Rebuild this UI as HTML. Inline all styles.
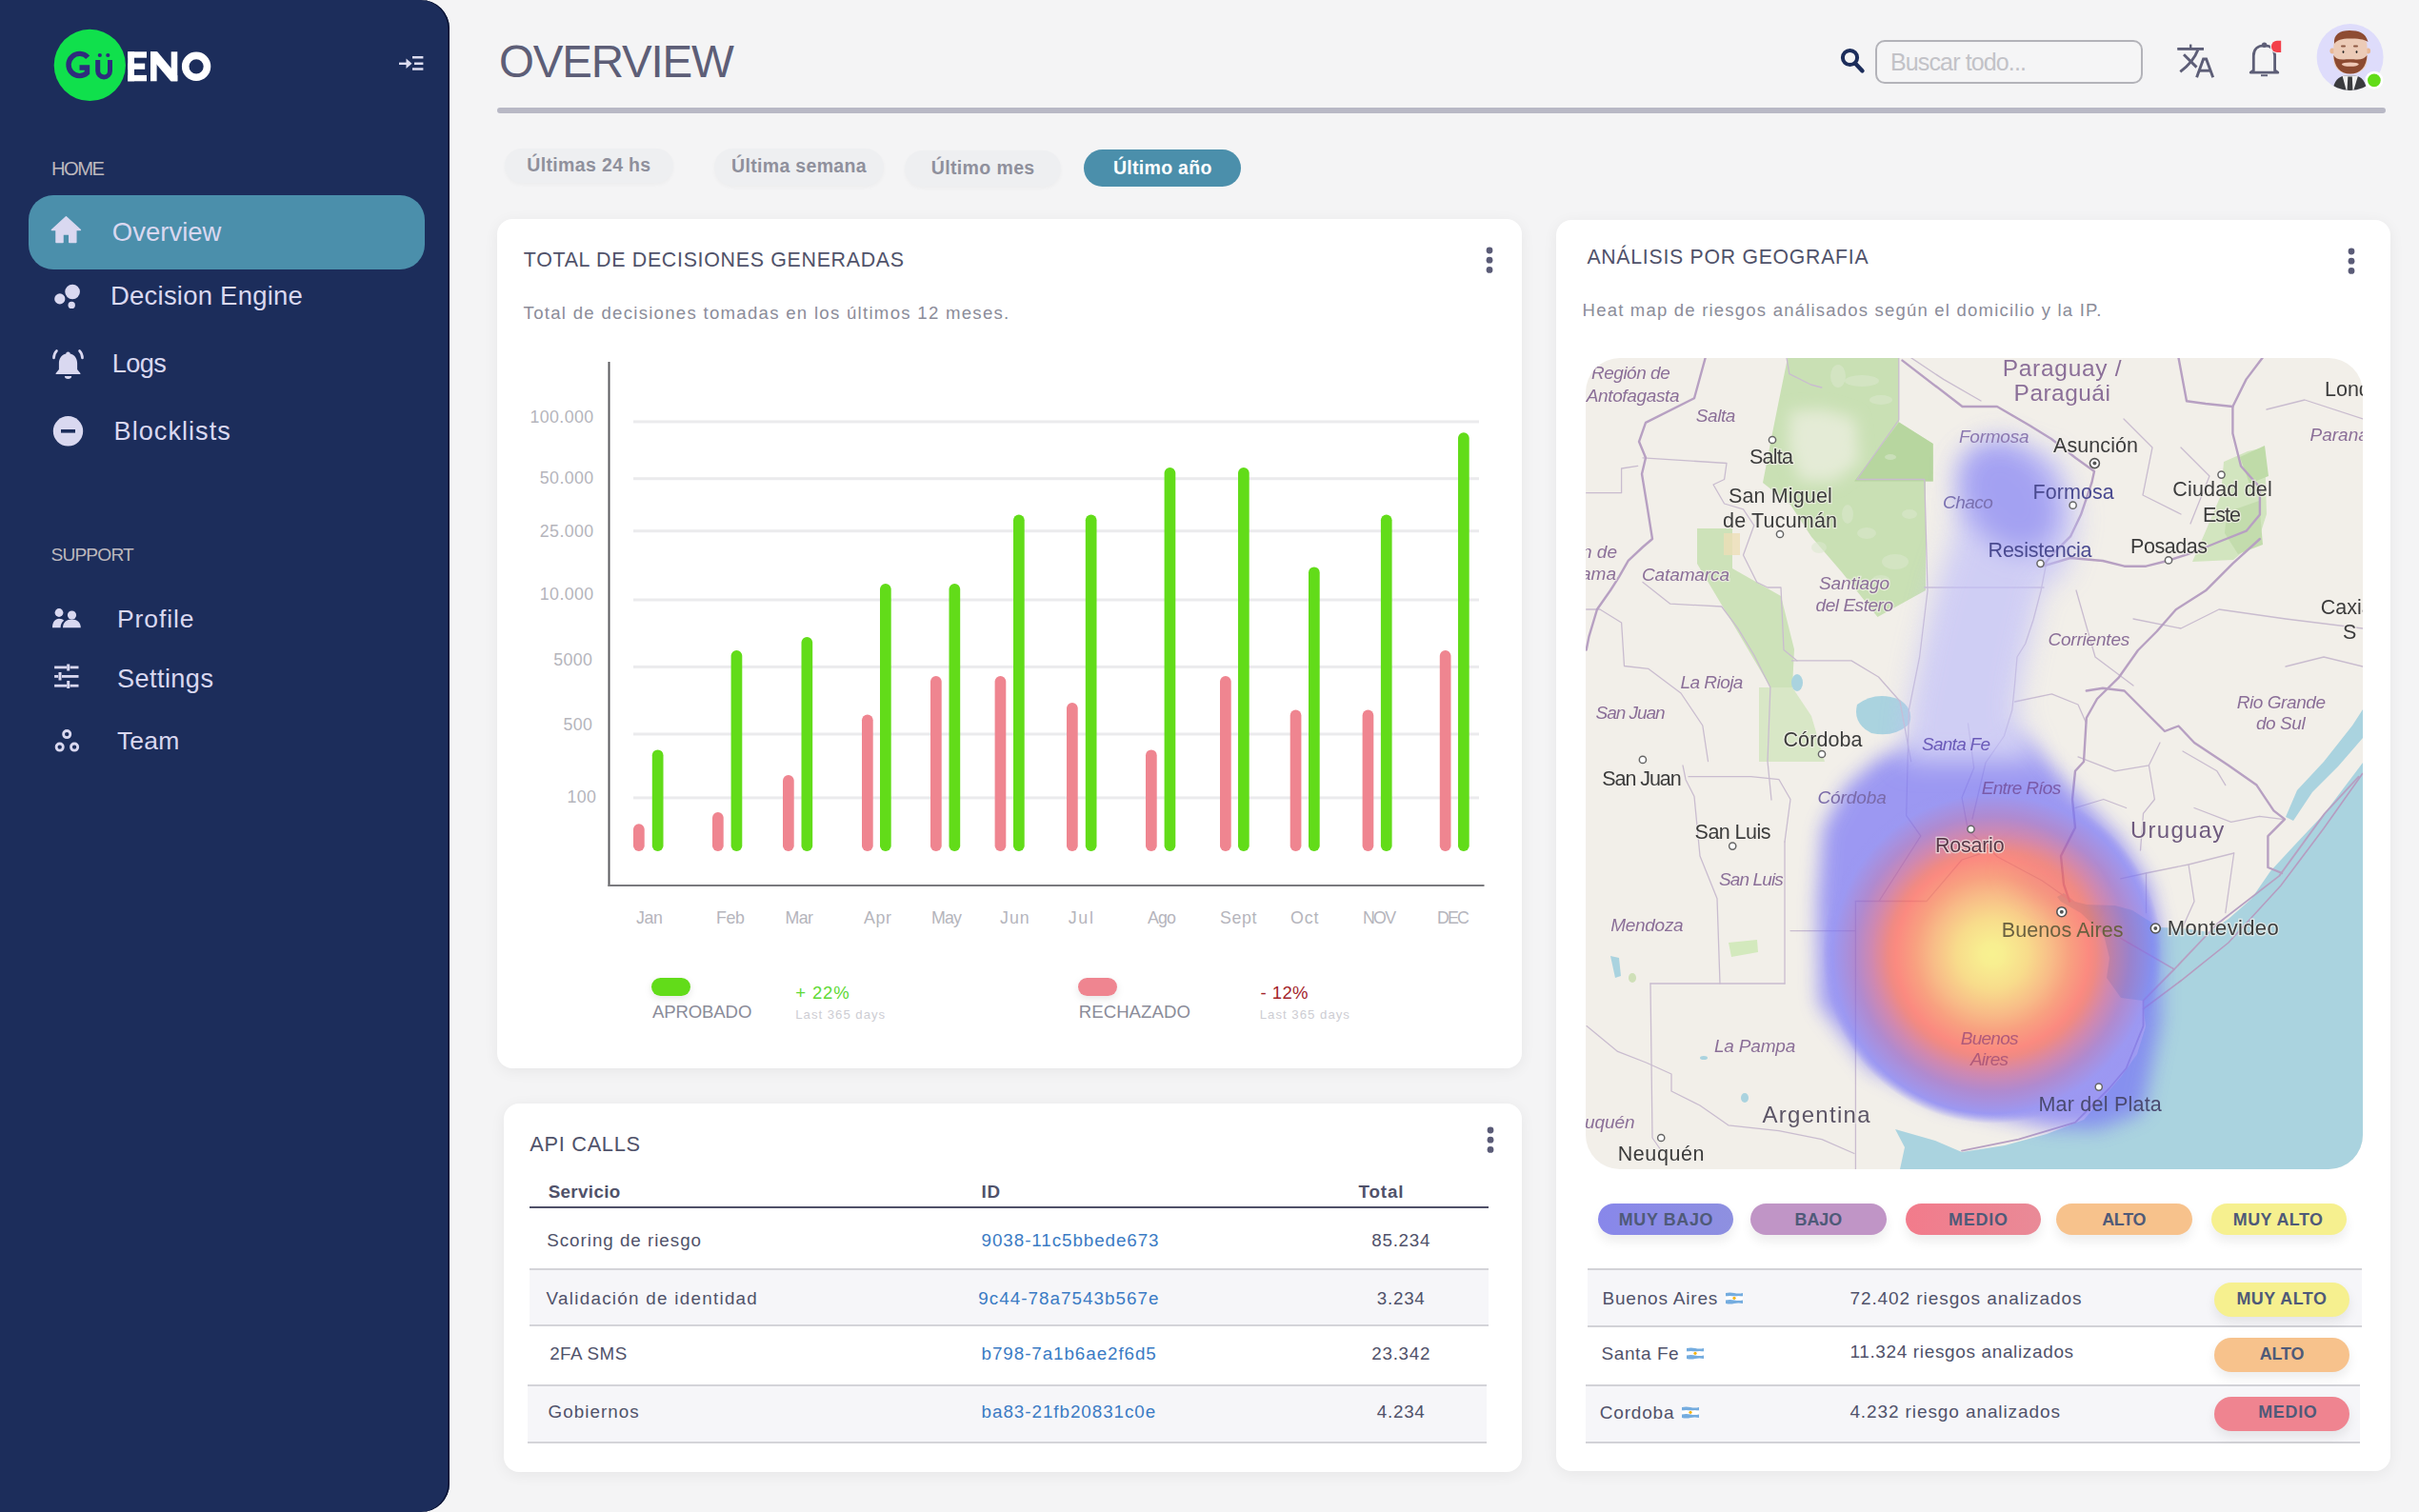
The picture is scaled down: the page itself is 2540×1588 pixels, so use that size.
<!DOCTYPE html>
<html><head><meta charset="utf-8">
<style>
*{box-sizing:border-box;margin:0;padding:0}
html,body{width:2540px;height:1588px;overflow:hidden;background:#f4f4f5;font-family:"Liberation Sans",sans-serif;position:relative}
.t{position:absolute;white-space:nowrap;line-height:1}
.a{position:absolute}
</style></head>
<body>
<div class="a" style="left:0;top:0;width:472px;height:1588px;background:#1c2d5b;border-radius:0 30px 30px 0;box-shadow:inset -1.6px 0 0 #0b1434"></div>
<svg class="a" style="left:0;top:0" width="472" height="120" viewBox="0 0 472 120">
<circle cx="94.3" cy="68.4" r="37.6" fill="#10e04c"/>
<path d="M92.2 60.2 A 11.6 11.6 0 1 0 91.5 76.5 L 91.5 71 L 83.5 71" fill="none" stroke="#2e2c7c" stroke-width="5.4"/>
<path d="M102.7 63 V 74.5 A 6.4 6.4 0 0 0 115.5 74.5 V 63" fill="none" stroke="#2e2c7c" stroke-width="5"/>
<circle cx="104.8" cy="58" r="2.1" fill="#2e2c7c"/><circle cx="113.3" cy="58" r="2.1" fill="#2e2c7c"/>
<g fill="#fff">
<rect x="134.2" y="54.3" width="6.8" height="31"/><rect x="134.2" y="54.3" width="19.8" height="6.4"/>
<rect x="134.2" y="66.6" width="18" height="6.2"/><rect x="134.2" y="78.9" width="19.8" height="6.4"/>
<rect x="158" y="54.3" width="6.6" height="31"/><rect x="179.7" y="54.3" width="6.6" height="31"/>
<polygon points="158,54.3 165.2,54.3 186.3,79.5 186.3,85.3 179.3,85.3 158,60"/>
</g>
<circle cx="206.1" cy="69.8" r="11.4" fill="none" stroke="#fff" stroke-width="7.6"/>
<g stroke="#dcdcf0" stroke-width="2.4" fill="none">
<path d="M419 66.8 H428"/><path d="M426.5 61.5 L432.5 66.8 L426.5 72.1Z" fill="#dcdcf0" stroke="none"/>
<path d="M433 60.3 H444.4 M435 66.8 H444.4 M433 72.5 H444.4"/>
</g>
</svg>
<div class="t" style="left:54.0px;top:166.8px;font-size:20.2px;color:#bcb8bd;letter-spacing:-1.53px;">HOME</div>
<div class="a" style="left:30px;top:205px;width:416px;height:78px;background:#4b8fab;border-radius:26px"></div>
<div class="t" style="left:117.8px;top:230.4px;font-size:27.5px;color:#d9d8f0;letter-spacing:0.01px;">Overview</div>
<div class="t" style="left:116.0px;top:297.1px;font-size:27.5px;color:#d9d8f0;letter-spacing:0.22px;">Decision Engine</div>
<div class="t" style="left:117.8px;top:367.7px;font-size:27.2px;color:#d9d8f0;letter-spacing:-0.67px;">Logs</div>
<div class="t" style="left:119.6px;top:438.7px;font-size:27.2px;color:#d9d8f0;letter-spacing:0.99px;">Blocklists</div>
<div class="t" style="left:53.5px;top:572.9px;font-size:19.2px;color:#bcb8bd;letter-spacing:-0.86px;">SUPPORT</div>
<div class="t" style="left:122.9px;top:636.8px;font-size:26.5px;color:#d9d8f0;letter-spacing:0.92px;">Profile</div>
<div class="t" style="left:122.9px;top:699.4px;font-size:27.2px;color:#d9d8f0;letter-spacing:0.41px;">Settings</div>
<div class="t" style="left:122.9px;top:765.0px;font-size:26.5px;color:#d9d8f0;letter-spacing:0.23px;">Team</div>
<svg class="a" style="left:0;top:200px" width="120" height="620" viewBox="0 200 120 620">
<g fill="#d9d8f0">
<path d="M69.4 227.8 L54.4 241.5 L59 241.5 L59 254.6 L66 254.6 L66 246 L72.8 246 L72.8 254.6 L79.8 254.6 L79.8 241.5 L84.4 241.5 Z" stroke="#d9d8f0" stroke-width="1.5" stroke-linejoin="round"/>
<circle cx="76.1" cy="306.5" r="7.8"/><circle cx="62.8" cy="313.9" r="5.6"/><circle cx="75.2" cy="320.4" r="3.7"/>
<path d="M71.5 369.5 c-1.3 0 -2.2 0.9 -2.2 2.1 c-4.6 1.2 -7.4 5 -7.4 10 v6.5 l-3.3 3.8 v1.2 h25.8 v-1.2 l-3.3 -3.8 v-6.5 c0 -5 -2.8 -8.8 -7.4 -10 c0 -1.2 -0.9 -2.1 -2.2 -2.1z"/>
<path d="M67.8 395 h7.4 c0 2 -1.6 3 -3.7 3 s-3.7 -1 -3.7 -3z"/>
<circle cx="71.5" cy="452.8" r="15.7"/>
<circle cx="62" cy="643.5" r="4.4"/><circle cx="75.5" cy="646" r="4.6"/>
<path d="M55 659.2 c0 -6 3 -9.5 7 -9.5 c2.5 0 4.2 0.8 5.2 2 c-2.2 1.5 -3.6 4 -3.6 7.5 z"/>
<path d="M66 659.2 c0 -5.5 4 -8.7 9.4 -8.7 s9.4 3.2 9.4 8.7 z"/>
</g>
<g fill="none" stroke="#d9d8f0" stroke-width="2.6" stroke-linecap="round">
<path d="M59.5 368.5 c-2 2 -3 4.5 -3 7.5 M83.5 368.5 c2 2 3 4.5 3 7.5"/>
</g>
<rect x="64" y="451" width="15" height="3.6" fill="#1c2d5b"/>
<g fill="#d9d8f0">
<rect x="57.1" y="699.5" width="13" height="2.8"/><rect x="73.5" y="699.5" width="9" height="2.8"/><rect x="70.2" y="697.5" width="3" height="7"/>
<rect x="57.1" y="709" width="4" height="2.8"/><rect x="65" y="709" width="17.5" height="2.8"/><rect x="61.5" y="706" width="3" height="8.5"/>
<rect x="57.1" y="718.8" width="13" height="2.8"/><rect x="73.5" y="718.8" width="9" height="2.8"/><rect x="70.2" y="715" width="3" height="8"/>
</g>
<g fill="none" stroke="#d9d8f0" stroke-width="2.8">
<circle cx="70.2" cy="771.1" r="3.6"/><circle cx="62.7" cy="784.6" r="3.6"/><circle cx="78.1" cy="784.6" r="3.6"/>
</g>
</svg>
<div class="t" style="left:524.0px;top:41.0px;font-size:47.5px;color:#5d5e77;letter-spacing:-1.19px;">OVERVIEW</div>
<div class="a" style="left:522px;top:113px;width:1983px;height:5.5px;background:#b8b8c5;border-radius:3px"></div>
<svg class="a" style="left:1925px;top:40px" width="40" height="45" viewBox="1925 40 40 45">
<circle cx="1942.5" cy="60.5" r="7.6" fill="none" stroke="#1c2d5b" stroke-width="4"/>
<path d="M1948 66.5 L1955.5 74.5" stroke="#1c2d5b" stroke-width="4.4" stroke-linecap="round"/>
</svg>
<div class="a" style="left:1969px;top:42px;width:281px;height:46px;border:2px solid #b3b3b9;border-radius:10px;background:#f5f5f6"></div>
<div class="t" style="left:1985.0px;top:53.0px;font-size:25px;color:#c2c2c7;letter-spacing:-0.87px;font-weight:normal;">Buscar todo...</div>
<svg class="a" style="left:2280px;top:40px" width="50" height="50" viewBox="2280 40 50 50">
<g stroke="#5d5e77" stroke-width="2.9" fill="none" stroke-linecap="butt">
<path d="M2286.2 51.4 H2314"/><path d="M2300.2 46.6 V51" stroke-width="2.4"/>
<path d="M2307.8 52.4 Q2303 65 2289.3 75.3"/>
<path d="M2293 57.2 L2306.5 70.6"/>
<path d="M2306.6 81.2 L2313.6 62 H2316.6 L2323.7 81.2" stroke-linejoin="miter"/><path d="M2309.6 74.2 H2320.6"/>
</g></svg>
<svg class="a" style="left:2355px;top:38px" width="45" height="48" viewBox="2355 38 45 48">
<path d="M2366.3 74 V58.5 C2366.3 51.5 2371 47.8 2377.6 47.8 C2384.2 47.8 2388.6 51.5 2388.6 58.5 V74 L2391.8 76.2 H2363.2 Z" fill="none" stroke="#5d5e77" stroke-width="2.8" stroke-linejoin="round"/>
<circle cx="2377.6" cy="47.2" r="2.7" fill="#5d5e77"/>
<rect x="2374" y="78.3" width="7" height="1.9" fill="#5d5e77"/>
<path d="M2395.2 42.8 V55 H2391 A6.1 6.1 0 0 1 2391 42.8 Z" fill="#f3404a" stroke="#f4f4f5" stroke-width="2.2" paint-order="stroke"/>
</svg>
<svg class="a" style="left:2425px;top:20px" width="90" height="80" viewBox="2425 20 90 80">
<defs><clipPath id="avc"><circle cx="2467.6" cy="60" r="35"/></clipPath></defs>
<circle cx="2467.6" cy="60" r="35" fill="#dedcfb"/>
<g clip-path="url(#avc)">
<path d="M2449.5 96 C2450 86 2455 80.5 2462 79.5 L2473 79.5 C2480 80.5 2484.5 86 2485 96z" fill="#3a3b3e"/>
<path d="M2459.5 79.5 L2476 79.5 L2471 96 L2464 96z" fill="#eeeeee"/>
<path d="M2465.3 80.5 L2469.8 80.5 L2470.5 96 L2464.5 96z" fill="#3a3b3e"/>
<ellipse cx="2449" cy="53.5" rx="2.6" ry="3" fill="#e8b896"/><ellipse cx="2486.5" cy="53.5" rx="2.6" ry="3" fill="#e8b896"/>
<path d="M2450.3 48 C2450.3 40 2457 36 2467.8 36 C2478.5 36 2485.5 40 2485.5 48 L2485.5 62 C2485.5 72 2478 77.5 2467.8 77.5 C2457.5 77.5 2450.3 72 2450.3 62z" fill="#eccbb7"/>
<path d="M2450.3 58 C2451 70 2457 77.5 2467.8 77.5 C2478.5 77.5 2485 70 2485.5 58 C2483 61 2480 62.5 2475 62.5 C2471 62 2464 62 2460 62.5 C2455 62.5 2452 61 2450.3 58z" fill="#8c4a31"/>
<ellipse cx="2467.8" cy="67.6" rx="9" ry="2.2" fill="#efc8b6"/>
<path d="M2451 46 C2450 36 2457 32 2467 32 C2477 32 2484 34.5 2486.5 44 C2482 41 2476 40.5 2467 40.5 C2459 40.5 2454 42 2451 46z" fill="#8e4c33"/>
<rect x="2458" y="47.5" width="5" height="2" rx="1" fill="#8e5a45"/><rect x="2471" y="47.5" width="5" height="2" rx="1" fill="#8e5a45"/>
<ellipse cx="2460.5" cy="54.6" rx="0.9" ry="1.3" fill="#222"/><ellipse cx="2474.5" cy="54.6" rx="0.9" ry="1.3" fill="#222"/>
</g>
<circle cx="2492.9" cy="84.3" r="8.2" fill="#62dc19" stroke="#fff" stroke-width="2.6"/>
</svg>
<div class="a" style="left:529.5px;top:155.6px;width:177px;height:36.5px;border-radius:19px;background:#eeeff1;box-shadow:0 2px 4px rgba(0,0,0,0.03)"></div>
<div class="a" style="left:750px;top:155.6px;width:178px;height:39px;border-radius:20px;background:#eeeff1;box-shadow:0 2px 4px rgba(0,0,0,0.03)"></div>
<div class="a" style="left:950px;top:158px;width:164px;height:38.4px;border-radius:20px;background:#eeeff1;box-shadow:0 2px 4px rgba(0,0,0,0.03)"></div>
<div class="a" style="left:1137.8px;top:157.4px;width:165.5px;height:39px;border-radius:20px;background:#4b8fab"></div>
<div class="t" style="left:553.3px;top:163.5px;font-size:19.5px;color:#8f909c;font-weight:bold;letter-spacing:0.35px;">Últimas 24 hs</div>
<div class="t" style="left:768.0px;top:165.2px;font-size:19.5px;color:#8f909c;font-weight:bold;letter-spacing:0.33px;">Última semana</div>
<div class="t" style="left:977.7px;top:166.5px;font-size:19.5px;color:#8f909c;font-weight:bold;letter-spacing:0.38px;">Último mes</div>
<div class="t" style="left:1169.0px;top:166.5px;font-size:19.5px;color:#ffffff;font-weight:bold;letter-spacing:0.29px;">Último año</div>
<div class="a" style="left:522px;top:230px;width:1076px;height:892px;background:#fff;border-radius:16px;box-shadow:0 3px 16px rgba(0,0,0,0.06)"></div>
<div class="t" style="left:549.8px;top:262.8px;font-size:21.4px;color:#50526a;letter-spacing:0.69px;">TOTAL DE DECISIONES GENERADAS</div>
<div class="t" style="left:549.6px;top:319.7px;font-size:18.6px;color:#8b8c99;letter-spacing:1.28px;">Total de decisiones tomadas en los últimos 12 meses.</div>
<svg class="a" style="left:1558.7px;top:257.9px" width="10" height="32" viewBox="1558.7 257.9 10 32"><g fill="#5a5b77"><circle cx="1563.7" cy="262.9" r="3.4"/><circle cx="1563.7" cy="273.09999999999997" r="3.4"/><circle cx="1563.7" cy="283.29999999999995" r="3.4"/></g></svg>
<svg class="a" style="left:540px;top:370px" width="1040" height="580" viewBox="540 370 1040 580"><rect x="665" y="441.4" width="888" height="3" fill="#ebebed"/><rect x="665" y="501.2" width="888" height="3" fill="#ebebed"/><rect x="665" y="556.2" width="888" height="3" fill="#ebebed"/><rect x="665" y="628.5" width="888" height="3" fill="#ebebed"/><rect x="665" y="698.9" width="888" height="3" fill="#ebebed"/><rect x="665" y="769.5" width="888" height="3" fill="#ebebed"/><rect x="665" y="836.4" width="888" height="3" fill="#ebebed"/><rect x="638.5" y="380" width="2" height="551" fill="#5b5b5f"/><rect x="638.5" y="929" width="920" height="2" fill="#7a7a7e"/><rect x="665" y="865.3" width="11.7" height="28.700000000000045" rx="5.8" fill="#ef8590"/><rect x="684.8" y="787.4" width="11.7" height="106.60000000000002" rx="5.8" fill="#62dc19"/><rect x="748" y="853" width="11.7" height="41" rx="5.8" fill="#ef8590"/><rect x="767.6" y="683" width="11.7" height="211" rx="5.8" fill="#62dc19"/><rect x="822" y="814" width="11.7" height="80" rx="5.8" fill="#ef8590"/><rect x="841.5" y="669" width="11.7" height="225" rx="5.8" fill="#62dc19"/><rect x="905" y="750.5" width="11.7" height="143.5" rx="5.8" fill="#ef8590"/><rect x="924" y="613" width="11.7" height="281" rx="5.8" fill="#62dc19"/><rect x="977" y="710" width="11.7" height="184" rx="5.8" fill="#ef8590"/><rect x="996.5" y="613" width="11.7" height="281" rx="5.8" fill="#62dc19"/><rect x="1044.6" y="710" width="11.7" height="184" rx="5.8" fill="#ef8590"/><rect x="1064" y="540.5" width="11.7" height="353.5" rx="5.8" fill="#62dc19"/><rect x="1120" y="738" width="11.7" height="156" rx="5.8" fill="#ef8590"/><rect x="1139.8" y="540.5" width="11.7" height="353.5" rx="5.8" fill="#62dc19"/><rect x="1203" y="787.4" width="11.7" height="106.60000000000002" rx="5.8" fill="#ef8590"/><rect x="1222.6" y="491" width="11.7" height="403" rx="5.8" fill="#62dc19"/><rect x="1281" y="710" width="11.7" height="184" rx="5.8" fill="#ef8590"/><rect x="1300" y="491" width="11.7" height="403" rx="5.8" fill="#62dc19"/><rect x="1354.7" y="745.6" width="11.7" height="148.39999999999998" rx="5.8" fill="#ef8590"/><rect x="1374" y="595.4" width="11.7" height="298.6" rx="5.8" fill="#62dc19"/><rect x="1430.6" y="745.6" width="11.7" height="148.39999999999998" rx="5.8" fill="#ef8590"/><rect x="1449.9" y="540.5" width="11.7" height="353.5" rx="5.8" fill="#62dc19"/><rect x="1511.8" y="683" width="11.7" height="211" rx="5.8" fill="#ef8590"/><rect x="1531" y="454.3" width="11.7" height="439.7" rx="5.8" fill="#62dc19"/></svg>
<div class="t" style="left:556.5px;top:430.2px;font-size:17.8px;color:#b5b5bc;letter-spacing:0.40px;">100.000</div>
<div class="t" style="left:566.8px;top:493.8px;font-size:17.8px;color:#b5b5bc;letter-spacing:0.40px;">50.000</div>
<div class="t" style="left:566.8px;top:550.0px;font-size:17.8px;color:#b5b5bc;letter-spacing:0.40px;">25.000</div>
<div class="t" style="left:566.8px;top:615.6px;font-size:17.8px;color:#b5b5bc;letter-spacing:0.40px;">10.000</div>
<div class="t" style="left:581.2px;top:685.2px;font-size:17.8px;color:#b5b5bc;letter-spacing:0.40px;">5000</div>
<div class="t" style="left:591.5px;top:753.0px;font-size:17.8px;color:#b5b5bc;letter-spacing:0.40px;">500</div>
<div class="t" style="left:595.5px;top:828.9px;font-size:17.8px;color:#b5b5bc;letter-spacing:0.40px;">100</div>
<div class="t" style="left:668.0px;top:955.5px;font-size:17.8px;color:#b5b5bc;letter-spacing:-0.35px;">Jan</div>
<div class="t" style="left:752.0px;top:955.5px;font-size:17.8px;color:#b5b5bc;letter-spacing:-0.32px;">Feb</div>
<div class="t" style="left:824.6px;top:955.5px;font-size:17.8px;color:#b5b5bc;letter-spacing:-0.63px;">Mar</div>
<div class="t" style="left:907.0px;top:955.5px;font-size:17.8px;color:#b5b5bc;letter-spacing:0.65px;">Apr</div>
<div class="t" style="left:978.0px;top:955.5px;font-size:17.8px;color:#b5b5bc;letter-spacing:-0.82px;">May</div>
<div class="t" style="left:1050.0px;top:955.5px;font-size:17.8px;color:#b5b5bc;letter-spacing:1.00px;">Jun</div>
<div class="t" style="left:1121.7px;top:955.5px;font-size:17.8px;color:#b5b5bc;letter-spacing:1.77px;">Jul</div>
<div class="t" style="left:1205.0px;top:955.5px;font-size:17.8px;color:#b5b5bc;letter-spacing:-0.82px;">Ago</div>
<div class="t" style="left:1281.0px;top:955.5px;font-size:17.8px;color:#b5b5bc;letter-spacing:0.60px;">Sept</div>
<div class="t" style="left:1355.0px;top:955.5px;font-size:17.8px;color:#b5b5bc;letter-spacing:0.95px;">Oct</div>
<div class="t" style="left:1431.0px;top:955.5px;font-size:17.8px;color:#b5b5bc;letter-spacing:-1.77px;">NOV</div>
<div class="t" style="left:1509.0px;top:955.5px;font-size:17.8px;color:#b5b5bc;letter-spacing:-1.80px;">DEC</div>
<div class="a" style="left:684px;top:1027px;width:41px;height:19px;border-radius:10px;background:#62dc19;box-shadow:0 3px 8px rgba(0,0,0,0.10)"></div>
<div class="a" style="left:1132px;top:1027px;width:41px;height:19px;border-radius:10px;background:#ef8590;box-shadow:0 3px 8px rgba(0,0,0,0.10)"></div>
<div class="t" style="left:685.0px;top:1053.5px;font-size:18.6px;color:#8b8c99;letter-spacing:-0.15px;">APROBADO</div>
<div class="t" style="left:1132.7px;top:1053.5px;font-size:18.6px;color:#8b8c99;letter-spacing:0.06px;">RECHAZADO</div>
<div class="t" style="left:835.3px;top:1033.5px;font-size:18.5px;color:#5ed936;letter-spacing:0.84px;">+ 22%</div>
<div class="t" style="left:1323.6px;top:1033.5px;font-size:18.5px;color:#a3242b;letter-spacing:0.41px;">- 12%</div>
<div class="t" style="left:835.3px;top:1058.8px;font-size:13.2px;color:#cdcdd3;letter-spacing:0.98px;">Last 365 days</div>
<div class="t" style="left:1322.7px;top:1058.8px;font-size:13.2px;color:#cdcdd3;letter-spacing:1.01px;">Last 365 days</div>
<div class="a" style="left:529px;top:1159px;width:1069px;height:387px;background:#fff;border-radius:16px;box-shadow:0 3px 16px rgba(0,0,0,0.06)"></div>
<div class="t" style="left:556.3px;top:1191.2px;font-size:21.8px;color:#50526a;letter-spacing:0.68px;">API CALLS</div>
<svg class="a" style="left:1560px;top:1182px" width="10" height="32" viewBox="1560 1182 10 32"><g fill="#5a5b77"><circle cx="1565" cy="1187" r="3.4"/><circle cx="1565" cy="1197.2" r="3.4"/><circle cx="1565" cy="1207.4" r="3.4"/></g></svg>
<div class="t" style="left:575.7px;top:1243.3px;font-size:18.8px;color:#50526a;font-weight:bold;letter-spacing:0.35px;">Servicio</div>
<div class="t" style="left:1030.6px;top:1243.3px;font-size:18.8px;color:#50526a;font-weight:bold;letter-spacing:0.60px;">ID</div>
<div class="t" style="left:1426.4px;top:1243.3px;font-size:18.8px;color:#50526a;font-weight:bold;letter-spacing:0.93px;">Total</div>
<div class="a" style="left:556px;top:1266.8px;width:1006.5px;height:2px;background:#4f5068"></div>
<div class="a" style="left:556px;top:1332px;width:1006.5px;height:60.5px;background:#f6f6f9;border-top:2px solid #d4d4d9;border-bottom:2px solid #d4d4d9"></div>
<div class="a" style="left:554px;top:1453.5px;width:1006.5px;height:62px;background:#f6f6f9;border-top:2px solid #d4d4d9;border-bottom:2px solid #d4d4d9"></div>
<div class="t" style="left:574.2px;top:1293.6px;font-size:18.8px;color:#50526a;letter-spacing:0.98px;">Scoring de riesgo</div>
<div class="t" style="left:1030.6px;top:1293.6px;font-size:18.8px;color:#3b7bc4;letter-spacing:0.94px;">9038-11c5bbede673</div>
<div class="t" style="left:1440.3px;top:1293.6px;font-size:18.8px;color:#50526a;letter-spacing:0.72px;">85.234</div>
<div class="t" style="left:573.6px;top:1355.0px;font-size:18.8px;color:#50526a;letter-spacing:1.29px;">Validación de identidad</div>
<div class="t" style="left:1027.2px;top:1355.0px;font-size:18.8px;color:#3b7bc4;letter-spacing:1.06px;">9c44-78a7543b567e</div>
<div class="t" style="left:1445.8px;top:1355.0px;font-size:18.8px;color:#50526a;letter-spacing:0.74px;">3.234</div>
<div class="t" style="left:577.2px;top:1413.3px;font-size:18.8px;color:#50526a;letter-spacing:0.46px;">2FA SMS</div>
<div class="t" style="left:1030.6px;top:1413.3px;font-size:18.8px;color:#3b7bc4;letter-spacing:0.94px;">b798-7a1b6ae2f6d5</div>
<div class="t" style="left:1440.3px;top:1413.3px;font-size:18.8px;color:#50526a;letter-spacing:0.72px;">23.342</div>
<div class="t" style="left:575.5px;top:1474.3px;font-size:18.8px;color:#50526a;letter-spacing:1.07px;">Gobiernos</div>
<div class="t" style="left:1030.6px;top:1474.3px;font-size:18.8px;color:#3b7bc4;letter-spacing:0.97px;">ba83-21fb20831c0e</div>
<div class="t" style="left:1445.8px;top:1474.3px;font-size:18.8px;color:#50526a;letter-spacing:0.74px;">4.234</div>
<div class="a" style="left:1633.5px;top:231px;width:876.5px;height:1314px;background:#fff;border-radius:16px;box-shadow:0 3px 16px rgba(0,0,0,0.06)"></div>
<div class="t" style="left:1666.4px;top:259.1px;font-size:21.2px;color:#50526a;letter-spacing:0.77px;">ANÁLISIS POR GEOGRAFIA</div>
<div class="t" style="left:1661.6px;top:316.5px;font-size:18.5px;color:#8b8c99;letter-spacing:1.21px;">Heat map de riesgos análisados según el domicilio y la IP.</div>
<svg class="a" style="left:2463.5px;top:259px" width="10" height="32" viewBox="2463.5 259 10 32"><g fill="#5a5b77"><circle cx="2468.5" cy="264" r="3.4"/><circle cx="2468.5" cy="274.2" r="3.4"/><circle cx="2468.5" cy="284.4" r="3.4"/></g></svg>
<svg class="a" style="left:1665px;top:376px" width="816" height="852" viewBox="1665 376 816 852"><defs>
<clipPath id="mc"><rect x="1665" y="376" width="816" height="852" rx="36" ry="36"/></clipPath>
<filter id="b8" x="-50%" y="-50%" width="200%" height="200%"><feGaussianBlur stdDeviation="8"/></filter>
<filter id="b14" x="-50%" y="-50%" width="200%" height="200%"><feGaussianBlur stdDeviation="14"/></filter>
<filter id="b24" x="-50%" y="-50%" width="200%" height="200%"><feGaussianBlur stdDeviation="24"/></filter>
<filter id="b34" x="-50%" y="-50%" width="200%" height="200%"><feGaussianBlur stdDeviation="34"/></filter>
</defs><g clip-path="url(#mc)"><rect x="1665" y="376" width="816" height="852" fill="#f2efe9"/><polygon points="1877.0,376.0 1994.0,376.0 1994.0,443.6 2029.7,466.0 2029.7,505.6 2022.0,505.6 2022.0,620.0 1971.5,648.0 1934.0,601.0 1902.0,563.8 1880.0,530.0 1851.0,507.0 1860.0,460.0 1868.0,420.0" fill="#c9e0b4"/><polygon points="1880.0,432.0 1915.0,430.0 1948.0,440.0 1952.0,485.0 1925.0,506.0 1890.0,505.0 1878.0,470.0" fill="#e4ebd6" filter="url(#b8)"/><polygon points="1994.0,443.6 2029.7,466.0 2029.7,505.6 1947.0,505.6" fill="#b7d69f"/><ellipse cx="1955" cy="400" rx="18" ry="6" fill="#dbe8cd" opacity="0.55"/><ellipse cx="1975" cy="420" rx="12" ry="5" fill="#dbe8cd" opacity="0.55"/><ellipse cx="1930" cy="395" rx="8" ry="12" fill="#dbe8cd" opacity="0.55"/><ellipse cx="1960" cy="560" rx="10" ry="6" fill="#dbe8cd" opacity="0.55"/><ellipse cx="1990" cy="590" rx="14" ry="8" fill="#dbe8cd" opacity="0.55"/><ellipse cx="1940" cy="540" rx="6" ry="10" fill="#dbe8cd" opacity="0.55"/><ellipse cx="2005" cy="540" rx="8" ry="5" fill="#dbe8cd" opacity="0.55"/><ellipse cx="1910" cy="575" rx="8" ry="6" fill="#dbe8cd" opacity="0.55"/><ellipse cx="1975" cy="610" rx="10" ry="6" fill="#dbe8cd" opacity="0.55"/><ellipse cx="1985" cy="480" rx="6" ry="3" fill="#dbe8cd" opacity="0.55"/><polygon points="1782.0,555.0 1819.0,555.0 1819.0,597.0 1870.0,626.0 1884.0,682.0 1882.0,722.0 1859.0,722.0 1819.0,654.0 1782.0,592.0" fill="#cde2b9"/><polygon points="1810.0,560.0 1827.0,560.0 1827.0,583.0 1810.0,583.0" fill="#ecdfb6" opacity="0.8"/><path d="M1847 722 l35 0 l20 30 l14 48 l-69 0z" fill="#d8e7c6"/><path d="M2335 485 L2360 474 L2378 470 L2380 540 L2372 565 L2345 588 L2302 590 L2315 560 L2332 520z" fill="#d2e5bf"/><path d="M2352 480 L2378 468 L2382 500 L2362 508z" fill="#bfdba8"/><path d="M2338 538 L2372 526 L2376 572 L2350 582 L2336 560z" fill="#c3dcad"/><path d="M1815 990 L1845 987 L1846 1000 L1818 1005z" fill="#d3e9bd"/><path d="M1691 1004 L1700 1006 L1702 1025 L1696 1027z" fill="#aad3df"/><ellipse cx="1714" cy="1027" rx="4" ry="5" fill="#cfe0b8"/><ellipse cx="1789" cy="1111" rx="4" ry="2" fill="#aad3df"/><ellipse cx="1832" cy="1153" rx="4" ry="5" fill="#aad3df"/><path d="M1950 740 q20 -15 45 -5 q15 10 10 25 q-15 15 -40 10 q-20 -10 -15 -30z" fill="#aad3df"/><ellipse cx="1887" cy="717" rx="6" ry="9" fill="#aad3df"/><polygon points="2481.0,801.0 2441.0,854.0 2409.0,888.0 2384.0,915.0 2364.0,944.0 2340.0,965.0 2320.0,979.0 2292.0,975.0 2268.0,974.0 2253.0,965.0 2239.0,956.0 2221.0,951.0 2191.0,950.0 2179.0,947.0 2167.0,938.0 2160.0,942.0 2164.0,947.0 2185.0,959.0 2209.0,982.0 2215.0,1006.0 2212.0,1027.0 2227.0,1048.0 2250.0,1051.0 2253.0,1078.0 2244.0,1107.0 2227.0,1131.0 2209.0,1152.0 2188.0,1176.0 2149.0,1191.0 2105.0,1203.0 2060.0,1210.0 2032.0,1198.0 1990.0,1186.0 2000.0,1205.0 1995.0,1228.0 2481.0,1228.0" fill="#aad3df"/><polygon points="2481.0,745.0 2481.0,775.0 2455.0,805.0 2428.0,832.0 2408.0,862.0 2400.0,858.0 2412.0,830.0 2440.0,800.0 2470.0,762.0" fill="#aad3df"/><path d="M2481 812 L2440 870 L2395 930 L2340 990 L2290 1030 L2250 1060" fill="none" stroke="#b69cc0" stroke-width="1.6"/><path d="M1665.7 517.7 L1702.6 517.7 L1702.6 492.0 L1719.7 489.3" fill="none" stroke="#c9bccf" stroke-width="1.3" stroke-linejoin="round" stroke-linecap="round" opacity="1"/><path d="M1725.0 480.8 L1813.0 486.5 L1810.6 503.5 L1799.0 509.0 L1810.6 529.0 L1830.5 534.8 L1841.8 551.8 L1830.5 583.0 L1844.7 611.5 L1856.0 617.0 L1870.0 617.0 L1873.0 682.5 L1887.0 693.9" fill="none" stroke="#c9bccf" stroke-width="1.3" stroke-linejoin="round" stroke-linecap="round" opacity="1"/><path d="M1665.7 640.0 L1680.0 640.0 L1702.6 654.0 L1705.5 699.5 L1731.0 702.4 L1765.0 728.0 L1787.8 762.0 L1793.5 799.5" fill="none" stroke="#c9bccf" stroke-width="1.3" stroke-linejoin="round" stroke-linecap="round" opacity="1"/><path d="M1725.0 611.5 L1753.8 634.2 L1807.7 637.0 L1824.8 659.8 L1841.8 688.0 L1858.9 722.0 L1856.0 799.5 L1860.0 840.0" fill="none" stroke="#c9bccf" stroke-width="1.3" stroke-linejoin="round" stroke-linecap="round" opacity="1"/><path d="M1881.6 693.9 L1944.0 693.9 L1972.5 711.0 L1995.0 736.5 L2006.6 799.5" fill="none" stroke="#c9bccf" stroke-width="1.3" stroke-linejoin="round" stroke-linecap="round" opacity="1"/><path d="M1993.8 375.7 L1993.8 441.0 L1949.8 503.5 L2020.8 503.5 L2024.0 620.5 L2015.6 690.0 L2004.4 745.6 L2001.7 856.7 L2016.8 878.0 L1973.0 946.5" fill="none" stroke="#c9bccf" stroke-width="1.3" stroke-linejoin="round" stroke-linecap="round" opacity="1"/><path d="M2020.8 617.0 L2146.0 617.0" fill="none" stroke="#c9bccf" stroke-width="1.3" stroke-linejoin="round" stroke-linecap="round" opacity="1"/><path d="M2006.6 375.7 L2040.7 398.4 L2080.0 421.0" fill="none" stroke="#c9bccf" stroke-width="1.3" stroke-linejoin="round" stroke-linecap="round" opacity="1"/><path d="M1876.0 375.7 L1878.8 392.7 L1901.5 404.0 L1912.8 407.0" fill="none" stroke="#c9bccf" stroke-width="1.3" stroke-linejoin="round" stroke-linecap="round" opacity="1"/><path d="M1880.0 977.6 L1948.4 977.6" fill="none" stroke="#c9bccf" stroke-width="1.3" stroke-linejoin="round" stroke-linecap="round" opacity="1"/><path d="M1948.4 946.5 L2023.0 946.5 L2060.0 903.0 L2079.0 896.8" fill="none" stroke="#c9bccf" stroke-width="1.3" stroke-linejoin="round" stroke-linecap="round" opacity="1"/><path d="M1948.4 946.5 L1948.4 1230.0" fill="none" stroke="#c9bccf" stroke-width="1.3" stroke-linejoin="round" stroke-linecap="round" opacity="1"/><path d="M1733.0 1033.0 L1874.0 1033.0" fill="none" stroke="#c9bccf" stroke-width="1.3" stroke-linejoin="round" stroke-linecap="round" opacity="1"/><path d="M1733.0 1033.0 L1735.0 1195.0 L1744.0 1208.0" fill="none" stroke="#c9bccf" stroke-width="1.3" stroke-linejoin="round" stroke-linecap="round" opacity="1"/><path d="M1874.0 884.0 L1874.0 1033.0" fill="none" stroke="#c9bccf" stroke-width="1.3" stroke-linejoin="round" stroke-linecap="round" opacity="1"/><path d="M1806.0 1033.0 L1803.0 943.7 L1785.0 899.0 L1779.0 836.5 L1770.0 818.7 L1767.0 803.8" fill="none" stroke="#c9bccf" stroke-width="1.3" stroke-linejoin="round" stroke-linecap="round" opacity="1"/><path d="M1874.0 884.0 L1880.0 839.5 L1868.0 818.7 L1838.6 815.7 L1773.0 815.7" fill="none" stroke="#c9bccf" stroke-width="1.3" stroke-linejoin="round" stroke-linecap="round" opacity="1"/><path d="M1666.0 1077.6 L1698.7 1104.4 L1728.5 1116.0 L1755.0 1128.0 L1755.0 1146.0 L1785.0 1161.0 L1814.8 1181.8 L1868.0 1187.7 L1913.0 1196.7 L1947.0 1211.5" fill="none" stroke="#c9bccf" stroke-width="1.3" stroke-linejoin="round" stroke-linecap="round" opacity="1"/><path d="M2066.5 760.0 L2072.7 806.6 L2060.0 837.7 L2066.5 872.0 L2097.6 900.0 L2144.0 924.8 L2175.0 946.5" fill="none" stroke="#c9bccf" stroke-width="1.3" stroke-linejoin="round" stroke-linecap="round" opacity="1"/><path d="M2149.0 590.0 L2143.0 620.5 L2135.0 651.0 L2126.7 676.0 L2118.0 690.0 L2115.6 717.8 L2112.8 745.6 L2104.4 773.0 L2085.0 801.0 L2071.0 860.0" fill="none" stroke="#c9bccf" stroke-width="1.3" stroke-linejoin="round" stroke-linecap="round" opacity="1"/><path d="M2115.6 737.0 L2154.4 728.9 L2182.0 740.0 L2190.6 759.4" fill="none" stroke="#c9bccf" stroke-width="1.3" stroke-linejoin="round" stroke-linecap="round" opacity="1"/><path d="M2182.0 794.9 L2220.7 809.8 L2256.4 803.8 L2268.0 780.0" fill="none" stroke="#c9bccf" stroke-width="1.3" stroke-linejoin="round" stroke-linecap="round" opacity="1"/><path d="M2256.4 803.8 L2262.4 839.5 L2250.5 854.4 L2247.5 893.0" fill="none" stroke="#c9bccf" stroke-width="1.3" stroke-linejoin="round" stroke-linecap="round" opacity="1"/><path d="M2179.0 848.5 L2208.8 839.5 L2232.6 848.5" fill="none" stroke="#c9bccf" stroke-width="1.3" stroke-linejoin="round" stroke-linecap="round" opacity="1"/><path d="M2292.0 789.0 L2327.9 809.8 L2336.8 824.6" fill="none" stroke="#c9bccf" stroke-width="1.3" stroke-linejoin="round" stroke-linecap="round" opacity="1"/><path d="M2304.0 848.5 L2342.7 863.3 L2372.5 857.4 L2396.3 860.4" fill="none" stroke="#c9bccf" stroke-width="1.3" stroke-linejoin="round" stroke-linecap="round" opacity="1"/><path d="M2226.7 922.9 L2253.5 917.0 L2298.0 908.0 L2345.7 896.0" fill="none" stroke="#c9bccf" stroke-width="1.3" stroke-linejoin="round" stroke-linecap="round" opacity="1"/><path d="M2298.0 908.0 L2304.0 946.7 L2292.0 973.5" fill="none" stroke="#c9bccf" stroke-width="1.3" stroke-linejoin="round" stroke-linecap="round" opacity="1"/><path d="M2253.5 917.0 L2253.5 958.6" fill="none" stroke="#c9bccf" stroke-width="1.3" stroke-linejoin="round" stroke-linecap="round" opacity="1"/><path d="M2345.7 896.0 L2336.8 958.6" fill="none" stroke="#c9bccf" stroke-width="1.3" stroke-linejoin="round" stroke-linecap="round" opacity="1"/><path d="M2240.0 650.0 L2290.0 660.0 L2330.0 640.0 L2400.0 650.0 L2481.0 660.0" fill="none" stroke="#c9bccf" stroke-width="1.3" stroke-linejoin="round" stroke-linecap="round" opacity="1"/><path d="M2400.0 700.0 L2440.0 690.0 L2481.0 700.0" fill="none" stroke="#c9bccf" stroke-width="1.3" stroke-linejoin="round" stroke-linecap="round" opacity="1"/><path d="M2230.0 440.0 L2260.0 470.0 L2250.0 520.0 L2290.0 540.0" fill="none" stroke="#c9bccf" stroke-width="1.3" stroke-linejoin="round" stroke-linecap="round" opacity="1"/><path d="M2290.0 470.0 L2320.0 500.0 L2300.0 550.0" fill="none" stroke="#c9bccf" stroke-width="1.3" stroke-linejoin="round" stroke-linecap="round" opacity="1"/><path d="M2380.0 430.0 L2420.0 420.0 L2481.0 440.0" fill="none" stroke="#c9bccf" stroke-width="1.3" stroke-linejoin="round" stroke-linecap="round" opacity="1"/><path d="M2180.0 620.0 L2200.0 690.0 L2240.0 720.0" fill="none" stroke="#c9bccf" stroke-width="1.3" stroke-linejoin="round" stroke-linecap="round" opacity="1"/><path d="M1790.7 375.7 L1779.0 418.3 L1728.0 443.9 L1721.0 463.8 L1728.0 480.8 L1724.0 497.8 L1729.6 532.0 L1735.0 566.0 L1725.0 574.5 L1709.7 588.8 L1700.0 605.8 L1691.0 620.0 L1677.0 640.0 L1668.5 668.3 L1665.7 682.5" fill="none" stroke="#b7a0c2" stroke-width="2.4" stroke-linejoin="round" stroke-linecap="round" opacity="1"/><path d="M1997.5 378.6 L2060.5 427.0 L2097.0 427.0 L2131.0 446.8 L2154.0 461.0 L2179.5 481.0 L2199.0 495.0 L2196.5 506.5 L2185.0 540.6 L2174.0 563.4 L2154.0 583.3 L2145.0 594.7" fill="none" stroke="#b7a0c2" stroke-width="2.4" stroke-linejoin="round" stroke-linecap="round" opacity="1"/><path d="M2145.0 594.7 L2174.0 586.0 L2208.0 589.0 L2230.6 594.7 L2253.4 594.7 L2276.0 589.0 L2301.7 580.5 L2330.0 569.0 L2358.6 557.7 L2372.9 540.6 L2372.9 512.0 L2353.0 489.5 L2344.4 455.3 L2344.4 427.0 L2358.6 398.4 L2375.7 375.7" fill="none" stroke="#b7a0c2" stroke-width="2.4" stroke-linejoin="round" stroke-linecap="round" opacity="1"/><path d="M2287.5 375.7 L2296.0 421.2 L2316.0 424.0 L2344.4 427.0" fill="none" stroke="#b7a0c2" stroke-width="2.4" stroke-linejoin="round" stroke-linecap="round" opacity="1"/><path d="M2372.9 566.0 L2344.4 591.8 L2316.0 620.3 L2284.7 640.2 L2264.8 663.0 L2244.9 683.0 L2225.0 711.3 L2202.0 734.0 L2190.8 754.0 L2188.0 800.0 L2179.0 809.8 L2176.0 839.5 L2179.0 869.3 L2164.0 899.0 L2167.0 928.8 L2173.0 946.7" fill="none" stroke="#b7a0c2" stroke-width="2.4" stroke-linejoin="round" stroke-linecap="round" opacity="1"/><path d="M2190.8 725.5 L2208.0 722.7 L2230.6 725.5 L2259.0 754.0 L2273.0 768.0 L2287.5 762.5 L2304.0 780.0 L2339.8 803.8 L2369.5 824.6 L2387.4 851.4 L2399.0 860.4 L2381.4 878.2 L2381.4 911.0 L2396.0 917.0" fill="none" stroke="#b7a0c2" stroke-width="2.4" stroke-linejoin="round" stroke-linecap="round" opacity="1"/><path d="M2476.7 815.7 L2441.0 854.4 L2393.3 919.9 L2328.0 970.5 L2283.0 1018.0 L2250.5 1050.8 L2250.5 1077.6 L2232.6 1122.0 L2214.8 1143.0 L2179.0 1178.8 L2119.5 1196.7 L2060.0 1208.6" fill="none" stroke="#b7a0c2" stroke-width="1.8" stroke-linejoin="round" stroke-linecap="round" opacity="1"/><path d="M2226.7 985.4 L2283.0 1018.0" fill="none" stroke="#b7a0c2" stroke-width="1.6" stroke-linejoin="round" stroke-linecap="round" opacity="1"/><defs><radialGradient id="hg" cx="2092" cy="1002" r="178" gradientUnits="userSpaceOnUse"><stop offset="0.0" stop-color="rgb(251,243,106)" stop-opacity="1"/><stop offset="0.066" stop-color="rgb(251,238,106)" stop-opacity="1"/><stop offset="0.208" stop-color="rgb(251,212,100)" stop-opacity="1"/><stop offset="0.351" stop-color="rgb(251,166,94)" stop-opacity="1"/><stop offset="0.46" stop-color="rgb(251,126,83)" stop-opacity="1"/><stop offset="0.57" stop-color="rgb(255,95,83)" stop-opacity="1"/><stop offset="0.613" stop-color="rgb(239,95,89)" stop-opacity="1"/><stop offset="0.712" stop-color="rgb(193,92,152)" stop-opacity="1"/><stop offset="0.811" stop-color="rgb(148,95,197)" stop-opacity="1"/><stop offset="0.942" stop-color="rgb(119,115,246)" stop-opacity="1"/><stop offset="1.0" stop-color="rgb(119,115,246)" stop-opacity="0"/></radialGradient><filter id="b10" x="-50%" y="-50%" width="200%" height="200%"><feGaussianBlur stdDeviation="10"/></filter></defs><g opacity="0.7"><polygon points="1910.0,1054.0 1908.0,950.0 1914.0,870.0 1938.0,826.0 1972.0,797.0 2020.0,776.0 2060.0,770.0 2097.0,770.0 2133.0,781.0 2178.0,832.0 2226.0,880.0 2257.0,929.0 2268.0,978.0 2269.0,1072.0 2250.0,1168.0 2203.0,1186.0 2151.0,1184.0 2041.0,1160.0 1962.0,1122.0" fill="rgb(119,115,246)" filter="url(#b10)"/><polygon points="2000.0,800.0 2004.0,746.0 2015.0,690.0 2032.0,620.0 2052.0,560.0 2060.0,480.0 2100.0,462.0 2160.0,480.0 2182.0,540.0 2170.0,600.0 2143.0,620.0 2127.0,690.0 2116.0,746.0 2140.0,800.0" fill="rgb(193,192,249)" filter="url(#b14)"/><ellipse cx="2110" cy="522" rx="46" ry="62" transform="rotate(-35 2110 522)" fill="rgb(130,128,246)" filter="url(#b14)"/><circle cx="2092" cy="1002" r="178" fill="url(#hg)"/><ellipse cx="2150" cy="925" rx="40" ry="22" transform="rotate(30 2150 925)" fill="rgb(239,95,89)" opacity="0.5" filter="url(#b14)"/></g><text x="1837.0" y="486.5" font-size="21.5" fill="#3c3c3c" letter-spacing="-0.76" stroke="#f2efe9" stroke-width="2.5" stroke-opacity="0.7" paint-order="stroke" font-family="Liberation Sans">Salta</text><text x="1815.0" y="528.3" font-size="21.5" fill="#3c3c3c" letter-spacing="0.14" stroke="#f2efe9" stroke-width="2.5" stroke-opacity="0.7" paint-order="stroke" font-family="Liberation Sans">San Miguel</text><text x="1809.0" y="553.8" font-size="21.5" fill="#3c3c3c" letter-spacing="0.19" stroke="#f2efe9" stroke-width="2.5" stroke-opacity="0.7" paint-order="stroke" font-family="Liberation Sans">de Tucumán</text><text x="1872.5" y="783.8" font-size="21.5" fill="#3c3c3c" letter-spacing="0.08" stroke="#f2efe9" stroke-width="2.5" stroke-opacity="0.7" paint-order="stroke" font-family="Liberation Sans">Córdoba</text><text x="1682.3" y="824.6" font-size="21.5" fill="#3c3c3c" letter-spacing="-1.06" stroke="#f2efe9" stroke-width="2.5" stroke-opacity="0.7" paint-order="stroke" font-family="Liberation Sans">San Juan</text><text x="1779.6" y="881.1" font-size="21.5" fill="#3c3c3c" letter-spacing="-0.55" stroke="#f2efe9" stroke-width="2.5" stroke-opacity="0.7" paint-order="stroke" font-family="Liberation Sans">San Luis</text><text x="2032.0" y="894.5" font-size="21.5" fill="#5a3a4a" letter-spacing="-0.25" stroke="#f2efe9" stroke-width="2.5" stroke-opacity="0.7" paint-order="stroke" font-family="Liberation Sans">Rosario</text><text x="2101.7" y="983.8" font-size="21.5" fill="#6a6040" letter-spacing="0.11" font-family="Liberation Sans">Buenos Aires</text><text x="2275.8" y="982.0" font-size="22" fill="#3c3c3c" letter-spacing="0.35" stroke="#f2efe9" stroke-width="2.5" stroke-opacity="0.7" paint-order="stroke" font-family="Liberation Sans">Montevideo</text><text x="2140.4" y="1166.8" font-size="21.5" fill="#4a4a70" letter-spacing="0.23" font-family="Liberation Sans">Mar del Plata</text><text x="1850.5" y="1178.9" font-size="24" fill="#5c5566" letter-spacing="1.29" stroke="#f2efe9" stroke-width="2.5" stroke-opacity="0.7" paint-order="stroke" font-family="Liberation Sans">Argentina</text><text x="1698.7" y="1218.8" font-size="21.5" fill="#3c3c3c" letter-spacing="0.59" stroke="#f2efe9" stroke-width="2.5" stroke-opacity="0.7" paint-order="stroke" font-family="Liberation Sans">Neuquén</text><text x="2156.0" y="475.2" font-size="21.5" fill="#3c3c3c" letter-spacing="0.08" stroke="#f2efe9" stroke-width="2.5" stroke-opacity="0.7" paint-order="stroke" font-family="Liberation Sans">Asunción</text><text x="2134.5" y="523.6" font-size="21.5" fill="#4a4a90" letter-spacing="0.08" font-family="Liberation Sans">Formosa</text><text x="2087.6" y="584.8" font-size="21.5" fill="#4a4a90" letter-spacing="-0.23" font-family="Liberation Sans">Resistencia</text><text x="2237.0" y="580.5" font-size="21.5" fill="#3c3c3c" letter-spacing="-0.44" stroke="#f2efe9" stroke-width="2.5" stroke-opacity="0.7" paint-order="stroke" font-family="Liberation Sans">Posadas</text><text x="2281.3" y="520.8" font-size="21.5" fill="#3c3c3c" letter-spacing="0.18" stroke="#f2efe9" stroke-width="2.5" stroke-opacity="0.7" paint-order="stroke" font-family="Liberation Sans">Ciudad del</text><text x="2313.0" y="548.3" font-size="21.5" fill="#3c3c3c" letter-spacing="-1.00" stroke="#f2efe9" stroke-width="2.5" stroke-opacity="0.7" paint-order="stroke" font-family="Liberation Sans">Este</text><text x="2237.0" y="879.5" font-size="24" fill="#6e5a7e" letter-spacing="1.27" stroke="#f2efe9" stroke-width="2.5" stroke-opacity="0.7" paint-order="stroke" font-family="Liberation Sans">Uruguay</text><text x="2102.7" y="394.9" font-size="24.5" fill="#8b6f98" letter-spacing="0.72" stroke="#f2efe9" stroke-width="2.5" stroke-opacity="0.7" paint-order="stroke" font-family="Liberation Sans">Paraguay /</text><text x="2114.6" y="420.5" font-size="24.5" fill="#8b6f98" letter-spacing="0.46" stroke="#f2efe9" stroke-width="2.5" stroke-opacity="0.7" paint-order="stroke" font-family="Liberation Sans">Paraguái</text><text x="2436.8" y="644.8" font-size="21.5" fill="#3c3c3c" letter-spacing="0.00" stroke="#f2efe9" stroke-width="2.5" stroke-opacity="0.7" paint-order="stroke" font-family="Liberation Sans">Caxias</text><text x="2460.0" y="670.6" font-size="21.5" fill="#3c3c3c" letter-spacing="0.00" stroke="#f2efe9" stroke-width="2.5" stroke-opacity="0.7" paint-order="stroke" font-family="Liberation Sans">S</text><text x="2441.0" y="416.1" font-size="21.5" fill="#3c3c3c" letter-spacing="0.00" stroke="#f2efe9" stroke-width="2.5" stroke-opacity="0.7" paint-order="stroke" font-family="Liberation Sans">Londrina</text><text x="1671.0" y="397.9" font-size="19" fill="#8b6f98" letter-spacing="-0.49" font-style="italic" stroke="#f2efe9" stroke-width="2.5" stroke-opacity="0.7" paint-order="stroke" font-family="Liberation Sans">Región de</text><text x="1665.7" y="421.5" font-size="19" fill="#8b6f98" letter-spacing="-0.35" font-style="italic" stroke="#f2efe9" stroke-width="2.5" stroke-opacity="0.7" paint-order="stroke" font-family="Liberation Sans">Antofagasta</text><text x="1780.7" y="443.1" font-size="19" fill="#8b6f98" letter-spacing="-0.39" font-style="italic" stroke="#f2efe9" stroke-width="2.5" stroke-opacity="0.7" paint-order="stroke" font-family="Liberation Sans">Salta</text><text x="1724.0" y="610.1" font-size="19" fill="#8b6f98" letter-spacing="-0.12" font-style="italic" stroke="#f2efe9" stroke-width="2.5" stroke-opacity="0.7" paint-order="stroke" font-family="Liberation Sans">Catamarca</text><text x="1910.0" y="618.9" font-size="19" fill="#8b6f98" letter-spacing="-0.14" font-style="italic" stroke="#f2efe9" stroke-width="2.5" stroke-opacity="0.7" paint-order="stroke" font-family="Liberation Sans">Santiago</text><text x="1906.6" y="641.6" font-size="19" fill="#8b6f98" letter-spacing="-0.46" font-style="italic" stroke="#f2efe9" stroke-width="2.5" stroke-opacity="0.7" paint-order="stroke" font-family="Liberation Sans">del Estero</text><text x="1764.5" y="722.6" font-size="19" fill="#8b6f98" letter-spacing="-0.54" font-style="italic" stroke="#f2efe9" stroke-width="2.5" stroke-opacity="0.7" paint-order="stroke" font-family="Liberation Sans">La Rioja</text><text x="1675.6" y="755.1" font-size="19" fill="#8b6f98" letter-spacing="-1.04" font-style="italic" stroke="#f2efe9" stroke-width="2.5" stroke-opacity="0.7" paint-order="stroke" font-family="Liberation Sans">San Juan</text><text x="1908.5" y="843.7" font-size="19" fill="#7a6aa8" letter-spacing="-0.10" font-style="italic" font-family="Liberation Sans">Córdoba</text><text x="2018.0" y="788.1" font-size="19" fill="#6a5ab8" letter-spacing="-0.73" font-style="italic" font-family="Liberation Sans">Santa Fe</text><text x="2080.8" y="834.1" font-size="19" fill="#7a5aa8" letter-spacing="-0.71" font-style="italic" font-family="Liberation Sans">Entre Ríos</text><text x="2040.0" y="533.8" font-size="19" fill="#7a70b0" letter-spacing="-0.55" font-style="italic" font-family="Liberation Sans">Chaco</text><text x="2057.0" y="465.1" font-size="19" fill="#8b78b0" letter-spacing="-0.25" font-style="italic" font-family="Liberation Sans">Formosa</text><text x="2150.4" y="677.5" font-size="19" fill="#8b6f98" letter-spacing="-0.19" font-style="italic" stroke="#f2efe9" stroke-width="2.5" stroke-opacity="0.7" paint-order="stroke" font-family="Liberation Sans">Corrientes</text><text x="2348.7" y="743.7" font-size="19" fill="#8b6f98" letter-spacing="-0.43" font-style="italic" stroke="#f2efe9" stroke-width="2.5" stroke-opacity="0.7" paint-order="stroke" font-family="Liberation Sans">Rio Grande</text><text x="2369.0" y="765.6" font-size="19" fill="#8b6f98" letter-spacing="-0.45" font-style="italic" stroke="#f2efe9" stroke-width="2.5" stroke-opacity="0.7" paint-order="stroke" font-family="Liberation Sans">do Sul</text><text x="2425.5" y="462.7" font-size="19" fill="#8b6f98" letter-spacing="0.00" font-style="italic" stroke="#f2efe9" stroke-width="2.5" stroke-opacity="0.7" paint-order="stroke" font-family="Liberation Sans">Paraná</text><text x="1691.2" y="977.6" font-size="19" fill="#8b6f98" letter-spacing="-0.28" font-style="italic" stroke="#f2efe9" stroke-width="2.5" stroke-opacity="0.7" paint-order="stroke" font-family="Liberation Sans">Mendoza</text><text x="1805.0" y="930.1" font-size="19" fill="#8b6f98" letter-spacing="-0.88" font-style="italic" stroke="#f2efe9" stroke-width="2.5" stroke-opacity="0.7" paint-order="stroke" font-family="Liberation Sans">San Luis</text><text x="1799.9" y="1105.1" font-size="19" fill="#8b6f98" letter-spacing="-0.18" font-style="italic" stroke="#f2efe9" stroke-width="2.5" stroke-opacity="0.7" paint-order="stroke" font-family="Liberation Sans">La Pampa</text><text x="2058.8" y="1096.7" font-size="19" fill="#b05a7a" letter-spacing="-0.75" font-style="italic" font-family="Liberation Sans">Buenos</text><text x="2069.0" y="1119.1" font-size="19" fill="#b05a7a" letter-spacing="-0.82" font-style="italic" font-family="Liberation Sans">Aires</text><text x="1640.0" y="1185.1" font-size="19" fill="#8b6f98" letter-spacing="-0.10" font-style="italic" stroke="#f2efe9" stroke-width="2.5" stroke-opacity="0.7" paint-order="stroke" font-family="Liberation Sans">Neuquén</text><text x="1661.0" y="586.1" font-size="19" fill="#8b6f98" letter-spacing="0.00" font-style="italic" stroke="#f2efe9" stroke-width="2.5" stroke-opacity="0.7" paint-order="stroke" font-family="Liberation Sans">n de</text><text x="1660.0" y="609.1" font-size="19" fill="#8b6f98" letter-spacing="0.00" font-style="italic" stroke="#f2efe9" stroke-width="2.5" stroke-opacity="0.7" paint-order="stroke" font-family="Liberation Sans">ama</text><circle cx="1861" cy="462" r="3.6" fill="#fff" stroke="#666" stroke-width="1.5"/><circle cx="1869" cy="561" r="3.6" fill="#fff" stroke="#666" stroke-width="1.5"/><circle cx="1913" cy="792" r="3.6" fill="#fff" stroke="#666" stroke-width="1.5"/><circle cx="1724.9" cy="797.9" r="3.6" fill="#fff" stroke="#666" stroke-width="1.5"/><circle cx="1819.2" cy="888.6" r="3.6" fill="#fff" stroke="#666" stroke-width="1.5"/><circle cx="2069.5" cy="870.8" r="3.6" fill="#fff" stroke="#666" stroke-width="1.5"/><circle cx="2203.75" cy="1141.6" r="3.6" fill="#fff" stroke="#666" stroke-width="1.5"/><circle cx="1744.2" cy="1195" r="3.6" fill="#fff" stroke="#666" stroke-width="1.5"/><circle cx="2176.6" cy="530.7" r="3.6" fill="#fff" stroke="#666" stroke-width="1.5"/><circle cx="2142.5" cy="591.8" r="3.6" fill="#fff" stroke="#666" stroke-width="1.5"/><circle cx="2277" cy="588.4" r="3.6" fill="#fff" stroke="#666" stroke-width="1.5"/><circle cx="2332.5" cy="498.6" r="3.6" fill="#fff" stroke="#666" stroke-width="1.5"/><circle cx="2199.4" cy="486.6" r="5" fill="#fff" stroke="#555" stroke-width="1.6"/><circle cx="2199.4" cy="486.6" r="2" fill="#555"/><circle cx="2164.8" cy="957.7" r="5" fill="#fff" stroke="#555" stroke-width="1.6"/><circle cx="2164.8" cy="957.7" r="2" fill="#555"/><circle cx="2263.3" cy="975" r="5" fill="#fff" stroke="#555" stroke-width="1.6"/><circle cx="2263.3" cy="975" r="2" fill="#555"/></g></svg>
<div class="a" style="left:1677.6px;top:1263.5px;width:142.4px;height:33.2px;border-radius:17px;background:linear-gradient(90deg,#8887ea,#8e90e0);box-shadow:0 7px 12px rgba(0,0,0,0.07)"></div>
<div class="t" style="left:1699.8px;top:1272.8px;font-size:17.9px;color:#4f5a78;font-weight:bold;letter-spacing:0.64px;">MUY BAJO</div>
<div class="a" style="left:1838.2px;top:1263.5px;width:142.5px;height:33.2px;border-radius:17px;background:#c095c6;box-shadow:0 7px 12px rgba(0,0,0,0.07)"></div>
<div class="t" style="left:1884.6px;top:1272.8px;font-size:17.9px;color:#4f5a78;font-weight:bold;letter-spacing:-0.08px;">BAJO</div>
<div class="a" style="left:2000.5px;top:1263.5px;width:142.4px;height:33.2px;border-radius:17px;background:linear-gradient(90deg,#f27b8b,#e98a97);box-shadow:0 7px 12px rgba(0,0,0,0.07)"></div>
<div class="t" style="left:2045.9px;top:1272.8px;font-size:17.9px;color:#4f5a78;font-weight:bold;letter-spacing:0.86px;">MEDIO</div>
<div class="a" style="left:2158.7px;top:1263.5px;width:142.9px;height:33.2px;border-radius:17px;background:#f7c28c;box-shadow:0 7px 12px rgba(0,0,0,0.07)"></div>
<div class="t" style="left:2207.2px;top:1272.8px;font-size:17.9px;color:#4f5a78;font-weight:bold;letter-spacing:-0.25px;">ALTO</div>
<div class="a" style="left:2322px;top:1263.5px;width:142.4px;height:33.2px;border-radius:17px;background:#f6f08f;box-shadow:0 7px 12px rgba(0,0,0,0.07)"></div>
<div class="t" style="left:2344.8px;top:1272.8px;font-size:17.9px;color:#4f5a78;font-weight:bold;letter-spacing:0.48px;">MUY ALTO</div>
<div class="a" style="left:1667px;top:1332px;width:813px;height:62px;background:#f6f6f9;border-top:2px solid #d2d2d7;border-bottom:2px solid #d2d2d7"></div>
<div class="a" style="left:1665px;top:1453.5px;width:813px;height:62px;background:#f6f6f9;border-top:2px solid #d2d2d7;border-bottom:2px solid #d2d2d7"></div>
<div class="t" style="left:1682.5px;top:1354.1px;font-size:19px;color:#50526a;letter-spacing:0.81px;">Buenos Aires</div>
<svg class="a" style="left:1811.5px;top:1356.6px" width="18" height="13" viewBox="0 0 18 13"><path d="M0 1 Q4.5 0 9 1 T18 1 V4.5 Q13.5 3.5 9 4.5 T0 4.5Z" fill="#74acdf"/><path d="M0 4.5 Q4.5 3.5 9 4.5 T18 4.5 V8.5 Q13.5 7.5 9 8.5 T0 8.5Z" fill="#fff"/><path d="M0 8.5 Q4.5 7.5 9 8.5 T18 8.5 V12 Q13.5 11 9 12 T0 12Z" fill="#74acdf"/><circle cx="9" cy="6.3" r="1.6" fill="#f6b40e"/></svg>
<div class="t" style="left:1942.4px;top:1354.1px;font-size:19px;color:#50526a;letter-spacing:0.93px;">72.402 riesgos analizados</div>
<div class="a" style="left:2325.2px;top:1347px;width:142.3px;height:36.3px;border-radius:18px;background:#f6f08f;box-shadow:0 6px 12px rgba(0,0,0,0.08)"></div>
<div class="t" style="left:2348.4px;top:1355.8px;font-size:17.9px;color:#4f5a78;font-weight:bold;letter-spacing:0.52px;">MUY ALTO</div>
<div class="t" style="left:1681.6px;top:1412.0px;font-size:19px;color:#50526a;letter-spacing:0.56px;">Santa Fe</div>
<svg class="a" style="left:1771px;top:1414.5px" width="18" height="13" viewBox="0 0 18 13"><path d="M0 1 Q4.5 0 9 1 T18 1 V4.5 Q13.5 3.5 9 4.5 T0 4.5Z" fill="#74acdf"/><path d="M0 4.5 Q4.5 3.5 9 4.5 T18 4.5 V8.5 Q13.5 7.5 9 8.5 T0 8.5Z" fill="#fff"/><path d="M0 8.5 Q4.5 7.5 9 8.5 T18 8.5 V12 Q13.5 11 9 12 T0 12Z" fill="#74acdf"/><circle cx="9" cy="6.3" r="1.6" fill="#f6b40e"/></svg>
<div class="t" style="left:1942.4px;top:1410.0px;font-size:19px;color:#50526a;letter-spacing:0.64px;">11.324 riesgos analizados</div>
<div class="a" style="left:2325.2px;top:1405px;width:142.3px;height:36.3px;border-radius:18px;background:#f7c28c;box-shadow:0 6px 12px rgba(0,0,0,0.08)"></div>
<div class="t" style="left:2372.7px;top:1413.8px;font-size:17.9px;color:#4f5a78;font-weight:bold;letter-spacing:-0.08px;">ALTO</div>
<div class="t" style="left:1679.7px;top:1474.0px;font-size:19px;color:#50526a;letter-spacing:0.83px;">Cordoba</div>
<svg class="a" style="left:1765.6px;top:1476.5px" width="18" height="13" viewBox="0 0 18 13"><path d="M0 1 Q4.5 0 9 1 T18 1 V4.5 Q13.5 3.5 9 4.5 T0 4.5Z" fill="#74acdf"/><path d="M0 4.5 Q4.5 3.5 9 4.5 T18 4.5 V8.5 Q13.5 7.5 9 8.5 T0 8.5Z" fill="#fff"/><path d="M0 8.5 Q4.5 7.5 9 8.5 T18 8.5 V12 Q13.5 11 9 12 T0 12Z" fill="#74acdf"/><circle cx="9" cy="6.3" r="1.6" fill="#f6b40e"/></svg>
<div class="t" style="left:1942.4px;top:1472.8px;font-size:19px;color:#50526a;letter-spacing:0.90px;">4.232 riesgo analizados</div>
<div class="a" style="left:2325.2px;top:1466.5px;width:142.3px;height:36.3px;border-radius:18px;background:#ef8490;box-shadow:0 6px 12px rgba(0,0,0,0.08)"></div>
<div class="t" style="left:2371.2px;top:1475.3px;font-size:17.9px;color:#4f5a78;font-weight:bold;letter-spacing:0.74px;">MEDIO</div>
</body></html>
